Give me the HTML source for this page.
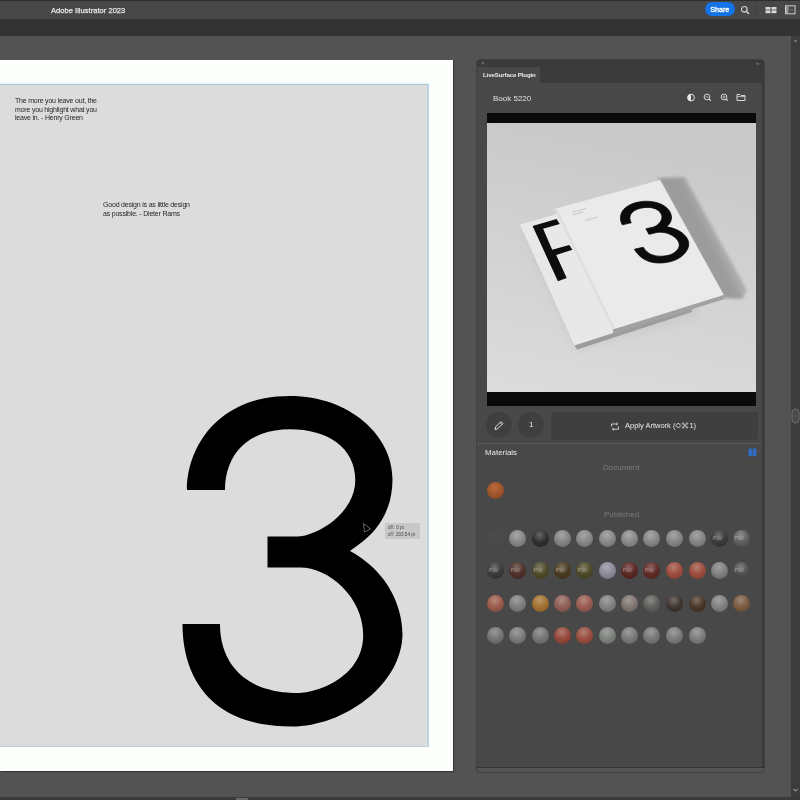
<!DOCTYPE html>
<html><head><meta charset="utf-8">
<style>
*{margin:0;padding:0;box-sizing:border-box}
.abs,.sph{will-change:transform}
html,body{width:800px;height:800px;overflow:hidden;background:#535353;font-family:"Liberation Sans",sans-serif}
.abs{position:absolute}
#topbar{left:0;top:0;width:800px;height:19px;background:#474747;border-top:1px solid #2e2e2e}
#title{left:51px;top:5.5px;font-size:7.6px;color:#e6e6e6;font-weight:normal;letter-spacing:0px;-webkit-text-stroke:0.25px #e6e6e6}
#bar2{left:0;top:19px;width:800px;height:17px;background:#333333}
#canvas{left:0;top:36px;width:791px;height:761px;background:#535353}
#bottombar{left:0;top:797px;width:800px;height:3px;background:#3a3a3a}
#artboard{left:0;top:60px;width:452.5px;height:711px;background:#fdfffd;box-shadow:1px 1px 1px rgba(0,0,0,0.35)}
#grayrect{left:0;top:84px;width:429px;height:663px;background:#dcdcdc;border-top:1.3px solid #adc2cc;border-right:2.6px solid #bdd5e3;border-bottom:1.5px solid #b9d2e0;box-shadow:0 -1.5px 0 #e6fafa}
.q{font-size:7px;color:#262626;line-height:8.7px;letter-spacing:-0.2px}

#panel{left:476.5px;top:59.5px;width:287px;height:712px;background:#484848;border-radius:3px;overflow:hidden;box-shadow:0 0 0 0.5px #2e2e2e}
#pedge{left:285px;top:0;width:2px;height:712px;background:#3a3a3a}
#ptitle{left:0;top:0;width:288.5px;height:6.5px;background:#3a3a3a}
#pclose{left:3.5px;top:0.3px;font-size:6px;color:#8a8a8a;line-height:7px}
#pcollapse{left:279px;top:0px;font-size:6px;color:#8a8a8a;line-height:7px}
#ptabrest{left:63px;top:6.5px;width:226px;height:16px;background:#3b3b3b}
#ptab{left:5.8px;top:10.6px;letter-spacing:-0.12px;font-size:6.1px;font-weight:bold;color:#ececec}
#bookname{left:16.3px;top:34px;font-size:8px;color:#e0e0e0}
#preview{left:9.5px;top:52.5px;width:269px;height:293.3px;background:#0a0a0a}
#photo{left:0;top:10px;width:269px;height:269px;background:#cfcfcf}
.circbtn{width:26px;height:26px;border-radius:50%;background:#3f3f3f}
#applybtn{left:74px;top:351.6px;width:206.5px;height:28px;border-radius:3px;background:#3f3f3f}
#psep{left:0;top:382.5px;width:284px;height:1.2px;background:#585858}
#mattitle{left:7.5px;top:387.5px;font-size:7.9px;color:#e8e8e8}
#docl{left:126px;top:402.5px;font-size:8px;color:#7a7a7a}
#publ{left:126.5px;top:449.8px;font-size:8px;color:#7a7a7a}

#share{left:705px;top:2px;width:29.5px;height:14px;border-radius:7px;background:#1473e6;color:#fff;font-size:7.2px;font-weight:normal;-webkit-text-stroke:0.3px #fff;text-align:center;line-height:15.5px}
#scrollbar{left:791px;top:36px;width:9px;height:761px;background:#3c3c3c}
#tooltip{left:385px;top:523px;width:35px;height:16px;background:#c8c8c8;border-radius:1px;font-size:4.6px;line-height:6.5px;color:#444;padding:2px 0 0 3px}
.sph{position:absolute;width:17px;height:17px;border-radius:50%}
#pbottom{left:0;top:706.5px;width:288px;height:5.5px;background:#545454;border-top:1px solid #333;border-bottom:1px solid #333}
.pw{position:absolute;left:1.5px;top:5px;font-size:6px;font-weight:bold;letter-spacing:-0.3px;line-height:7px;opacity:0.7}
</style></head><body>
<div class="abs" id="topbar"></div>
<div class="abs" id="title">Adobe Illustrator 2023</div>
<div class="abs" id="bar2"></div>
<div class="abs" id="canvas"></div>
<div class="abs" id="bottombar"></div>
<div class="abs" style="left:236px;top:797.5px;width:12px;height:2px;border-radius:1px;background:#6a6a6a"></div>
<div class="abs" id="artboard"></div>
<div class="abs" id="grayrect"></div>
<svg class="abs" style="left:0;top:0" width="800" height="800" viewBox="0 0 800 800"><path d="M187 490C187 448.3 216.8 396 290 396C349.4 396 392.5 435.4 392.5 479C392.5 524.7 361.5 542.4 350 551C399.4 578.2 402.5 623.3 402.5 633C402.5 685.3 343.3 726.5 292 726.5C197.5 726.5 182.5 661.6 182.5 624L220 624C220 658.9 240.5 693 298 693C317.2 693 363.2 677.2 363.2 635C363.2 597.4 329.2 567.5 300 567.5L267.5 567.5L267.5 536.5L297 536.5C317 536.5 355.3 513 355.3 480C355.3 447.8 328 429.2 290 429.2C248.1 429.2 225 454.3 225 490Z" fill="#000"/></svg>

<div class="abs q" style="left:15px;top:97.3px">The more you leave out, the<br>more you highlight what you<br>leave in. - Henry Green</div>
<div class="abs q" style="left:103px;top:200.6px">Good design is as little design<br>as possible. - Dieter Rams</div>

<div class="abs" id="panel">
  <div class="abs" id="ptitle"></div>
  <div class="abs" id="pedge"></div>
  <div class="abs" id="pclose">×</div>
  <div class="abs" id="pcollapse">»</div>
  <div class="abs" id="ptabrest"></div>
  <div class="abs" id="ptab">LiveSurface Plugin</div>
  <div class="abs" id="bookname">Book 5220</div>
  <div class="abs" id="preview"><div class="abs" id="photo"></div></div>
  <svg class="abs" id="photosvg" style="left:9.5px;top:62.5px" width="269" height="269" viewBox="486 122 269 269">
<defs>
<linearGradient id="bg" x1="0.2" y1="0" x2="0" y2="1"><stop offset="0" stop-color="#c8c9c8"/><stop offset="0.45" stop-color="#d2d2d2"/><stop offset="1" stop-color="#dcdcdc"/></linearGradient>
<linearGradient id="sh" gradientUnits="userSpaceOnUse" x1="700" y1="225" x2="722" y2="214"><stop offset="0" stop-color="#9c9c9c"/><stop offset="0.55" stop-color="#b4b4b4"/><stop offset="1" stop-color="#d2d2d2" stop-opacity="0"/></linearGradient>
<filter id="blur1" x="-20%" y="-20%" width="140%" height="140%"><feGaussianBlur stdDeviation="1.6"/></filter>
<filter id="blur2" x="-20%" y="-20%" width="140%" height="140%"><feGaussianBlur stdDeviation="4"/></filter>
</defs>
<rect x="486" y="122" width="269" height="269" fill="url(#bg)"/>
<polygon points="520,230 575,350 700,315 640,215" fill="#c4c4c4" filter="url(#blur2)" opacity="0.6"/>
<polygon points="657,177 684,176 746,289 741,298 722,297" fill="url(#sh)" filter="url(#blur1)"/>
<polygon points="519,223.6 556,213 690,307 573.5,344.5" fill="#e8e8e8"/>
<polygon points="573.5,344.5 690,307 691,311 576,348.5" fill="#9c9c9c"/>
<polygon points="531.6,225.1 555.6,218.1 558.7,222.9 542.1,227.7 551.2,248.7 568.3,243.9 571.4,248.7 555.2,253.9 565.7,277.1 556.9,280.2" fill="#0d0d0d"/>
<polygon points="553.3,207.9 659.1,179.1 722.9,293.9 611.75,328.5" fill="#eaeaea"/>
<polygon points="553.3,207.9 556,207.2 614,327.7 611.75,328.5" fill="#dedede"/>
<polygon points="611.75,328.5 722.9,293.9 723.5,298 612.5,333" fill="#a2a2a2"/>
<path d="M187 490C187 448.3 216.8 396 290 396C349.4 396 392.5 435.4 392.5 479C392.5 524.7 361.5 542.4 350 551C399.4 578.2 402.5 623.3 402.5 633C402.5 685.3 343.3 726.5 292 726.5C197.5 726.5 182.5 661.6 182.5 624L220 624C220 658.9 240.5 693 298 693C317.2 693 363.2 677.2 363.2 635C363.2 597.4 329.2 567.5 300 567.5L267.5 567.5L267.5 536.5L297 536.5C317 536.5 355.3 513 355.3 480C355.3 447.8 328 429.2 290 429.2C248.1 429.2 225 454.3 225 490Z" fill="#0b0b0b" stroke="#0b0b0b" stroke-width="3" transform="matrix(0.2365,-0.05526,0.0984,0.180,528.86,146.0)"/>
<g fill="#c9c9c9"><polygon points="571,211 585,207 585.3,208 571.3,212"/><polygon points="571.5,213.5 582,210.6 582.3,211.6 571.8,214.5"/><polygon points="584,219 597,215.5 597.3,216.5 584.3,220"/></g>
</svg>
  <div class="abs circbtn" style="left:9px;top:352px"></div>
  <div class="abs circbtn" style="left:41px;top:352px"><span class="abs" style="left:11px;top:8px;font-size:8px;color:#e8e8e8">1</span></div>
  <div class="abs" id="applybtn"><span class="abs" style="left:74px;top:8.8px;font-size:7.5px;color:#e8e8e8;white-space:nowrap">Apply Artwork (<svg width="14" height="7" viewBox="0 0 14 7" style="vertical-align:-0.5px"><path d="M0.8 3.5 L3.3 1 L5.8 3.5 L3.3 6 Z" fill="none" stroke="#e8e8e8" stroke-width="0.9"/><path d="M8.3 1.8 L11.7 5.2 M11.7 1.8 L8.3 5.2" stroke="#e8e8e8" stroke-width="0.9"/><circle cx="8" cy="1.5" r="0.8" fill="none" stroke="#e8e8e8" stroke-width="0.6"/><circle cx="12" cy="1.5" r="0.8" fill="none" stroke="#e8e8e8" stroke-width="0.6"/><circle cx="8" cy="5.5" r="0.8" fill="none" stroke="#e8e8e8" stroke-width="0.6"/><circle cx="12" cy="5.5" r="0.8" fill="none" stroke="#e8e8e8" stroke-width="0.6"/></svg>1)</span></div>

  <svg class="abs" style="left:208px;top:32px" width="72" height="12" viewBox="0 0 72 12">
    <circle cx="6" cy="5.6" r="3.4" fill="none" stroke="#e6e6e6" stroke-width="1"/><path d="M6 2.2 A3.4 3.4 0 0 0 6 9 Z" fill="#e6e6e6"/>
    <circle cx="22" cy="5" r="2.9" fill="none" stroke="#d6d6d6" stroke-width="1"/><line x1="24.1" y1="7.1" x2="25.8" y2="8.8" stroke="#d6d6d6" stroke-width="1.3"/><line x1="20.6" y1="5" x2="23.4" y2="5" stroke="#d6d6d6" stroke-width="0.8"/>
    <circle cx="39" cy="5" r="2.9" fill="none" stroke="#d6d6d6" stroke-width="1"/><line x1="41.1" y1="7.1" x2="42.8" y2="8.8" stroke="#d6d6d6" stroke-width="1.3"/><line x1="37.6" y1="5" x2="40.4" y2="5" stroke="#d6d6d6" stroke-width="0.8"/><line x1="39" y1="3.6" x2="39" y2="6.4" stroke="#d6d6d6" stroke-width="0.8"/>
    <path d="M52 2.5 L52 8.5 L60 8.5 L60 3.5 L56 3.5 L55 2.5 Z" fill="none" stroke="#d6d6d6" stroke-width="1"/><line x1="52" y1="4.6" x2="60" y2="4.6" stroke="#d6d6d6" stroke-width="0.8"/>
  </svg>
  <svg class="abs" style="left:15px;top:359px" width="14" height="14" viewBox="0 0 14 14"><path d="M3 10.5 L3.6 8 L9 2.6 L10.9 4.5 L5.5 9.9 Z" fill="none" stroke="#e0e0e0" stroke-width="1"/><line x1="8" y1="3.6" x2="9.9" y2="5.5" stroke="#e0e0e0" stroke-width="0.8"/></svg>
  <svg class="abs" style="left:132.5px;top:362px" width="10" height="9" viewBox="0 0 10 9"><path d="M1.5 4.5 L1.5 2 L7.5 2 M6.2 0.8 L7.6 2 L6.2 3.2 M8.5 4.5 L8.5 7.2 L2.5 7.2 M3.8 6 L2.4 7.2 L3.8 8.4" fill="none" stroke="#dcdcdc" stroke-width="0.9"/></svg>
  <svg class="abs" style="left:271px;top:388px" width="9" height="9" viewBox="0 0 9 9"><rect x="0.5" y="0.5" width="3.7" height="7.8" fill="#2f6cbf"/><rect x="4.7" y="0.5" width="3.7" height="7.8" fill="#2f6cbf"/></svg>
  <div class="abs" id="pbottom"></div>
  <div class="abs" id="psep"></div>
  <div class="abs" id="mattitle">Materials</div>
  <div class="abs" id="docl">Document</div>
  <div class="abs" id="publ">Published</div>
</div>

<div class="abs" id="share">Share</div>
<svg class="abs" style="left:738px;top:3px" width="14" height="14" viewBox="0 0 14 14"><circle cx="6.3" cy="6.3" r="2.8" fill="none" stroke="#d0d0d0" stroke-width="1.2"/><line x1="8.3" y1="8.3" x2="10.6" y2="10.6" stroke="#d0d0d0" stroke-width="1.4" stroke-linecap="round"/></svg>
<div class="abs" style="left:756px;top:4px;width:1px;height:12px;background:#3e3e3e"></div>
<svg class="abs" style="left:764px;top:5px" width="14" height="10" viewBox="0 0 14 10"><rect x="1.5" y="2" width="5" height="2.6" fill="#d8d8d8"/><rect x="7.5" y="2" width="5" height="2.6" fill="#d8d8d8"/><rect x="1.5" y="5.4" width="5" height="2.8" fill="#d8d8d8"/><rect x="7.5" y="5.4" width="5" height="2.8" fill="#d8d8d8"/></svg>
<svg class="abs" style="left:783px;top:4px" width="14" height="12" viewBox="0 0 14 12"><rect x="2.5" y="1.8" width="9.5" height="8" fill="none" stroke="#cfcfcf" stroke-width="1"/><rect x="3" y="2.3" width="2.5" height="7" fill="#9a9a9a"/><rect x="6" y="4.5" width="4" height="3" fill="#5a5a5a"/></svg>
<div class="abs" id="scrollbar"></div>
<svg class="abs" style="left:791px;top:36px" width="9" height="760" viewBox="0 0 9 760"><path d="M2.5 5.5 L4.5 3.5 L6.5 5.5" fill="#8a8a8a"/><rect x="1" y="373" width="7" height="14" rx="3.5" fill="#4a4a4a" stroke="#7a7a7a" stroke-width="0.8"/><path d="M2.5 753 L4.5 755.2 L6.5 753" fill="none" stroke="#bdbdbd" stroke-width="1"/></svg>
<div class="abs" id="tooltip">dX: 0 pt<br>dY: 203.54 pt</div>
<svg class="abs" style="left:360px;top:521px" width="14" height="16" viewBox="0 0 14 16"><path d="M3.5 2.5 L10.5 8 L4.5 11 Z" fill="none" stroke="#707070" stroke-width="0.9" stroke-linejoin="round"/></svg>
<div id="sphwrap"><div class="sph" style="left:487.3px;top:529.7px;background:#4a4a4a"></div><div class="sph" style="left:509.2px;top:529.7px;background:radial-gradient(circle at 45% 30%,#a7a7a7 0%,#858585 50%,#676767 100%)"></div>
<div class="sph" style="left:532.0px;top:529.7px;background:radial-gradient(circle at 45% 30%,#686868 0%,#2e2e2e 50%,#232323 100%)"></div>
<div class="sph" style="left:554.1px;top:529.7px;background:radial-gradient(circle at 45% 30%,#a5a5a5 0%,#838383 50%,#666666 100%)"></div>
<div class="sph" style="left:576.3px;top:529.7px;background:radial-gradient(circle at 45% 30%,#a7a7a7 0%,#868686 50%,#686868 100%)"></div>
<div class="sph" style="left:598.7px;top:529.7px;background:radial-gradient(circle at 45% 30%,#a9a9a9 0%,#888888 50%,#6a6a6a 100%)"></div>
<div class="sph" style="left:621.3px;top:529.7px;background:radial-gradient(circle at 45% 30%,#a9a9a9 0%,#888888 50%,#6a6a6a 100%)"></div>
<div class="sph" style="left:643.4px;top:529.7px;background:radial-gradient(circle at 45% 30%,#a7a7a7 0%,#868686 50%,#686868 100%)"></div>
<div class="sph" style="left:666.1px;top:529.7px;background:radial-gradient(circle at 45% 30%,#a6a6a6 0%,#848484 50%,#666666 100%)"></div>
<div class="sph" style="left:688.6px;top:529.7px;background:radial-gradient(circle at 45% 30%,#a5a5a5 0%,#838383 50%,#666666 100%)"></div>
<div class="sph" style="left:710.9px;top:529.7px;background:radial-gradient(circle at 45% 30%,#717171 0%,#3a3a3a 50%,#2d2d2d 100%)"><span class="pw" style="color:#929292">PW</span></div>
<div class="sph" style="left:733.3px;top:529.7px;background:radial-gradient(circle at 45% 30%,#8b8b8b 0%,#5e5e5e 50%,#494949 100%)"><span class="pw" style="color:#a6a6a6">PW</span></div>
<div class="sph" style="left:487.3px;top:561.8px;background:radial-gradient(circle at 45% 30%,#717171 0%,#3a3a3a 50%,#2d2d2d 100%)"><span class="pw" style="color:#929292">PW</span></div>
<div class="sph" style="left:509.2px;top:561.8px;background:radial-gradient(circle at 45% 30%,#7f6964 0%,#4e3028 50%,#3c251f 100%)"><span class="pw" style="color:#9d8d88">PW</span></div>
<div class="sph" style="left:532.0px;top:561.8px;background:radial-gradient(circle at 45% 30%,#7f7c64 0%,#4e4a28 50%,#3c391f 100%)"><span class="pw" style="color:#9d9b88">PW</span></div>
<div class="sph" style="left:554.1px;top:561.8px;background:radial-gradient(circle at 45% 30%,#7c715e 0%,#4a3a20 50%,#392d18 100%)"><span class="pw" style="color:#9b9284">PW</span></div>
<div class="sph" style="left:576.3px;top:561.8px;background:radial-gradient(circle at 45% 30%,#7f7c64 0%,#4e4a28 50%,#3c391f 100%)"><span class="pw" style="color:#9d9b88">PW</span></div>
<div class="sph" style="left:598.7px;top:561.8px;background:radial-gradient(circle at 45% 30%,#aca9b4 0%,#8c8898 50%,#6d6a76 100%)"></div>
<div class="sph" style="left:621.3px;top:561.8px;background:radial-gradient(circle at 45% 30%,#88625f 0%,#5a2622 50%,#461d1a 100%)"><span class="pw" style="color:#a48785">PW</span></div>
<div class="sph" style="left:643.4px;top:561.8px;background:radial-gradient(circle at 45% 30%,#8b6561 0%,#5e2a24 50%,#49201c 100%)"><span class="pw" style="color:#a68986">PW</span></div>
<div class="sph" style="left:666.1px;top:561.8px;background:radial-gradient(circle at 45% 30%,#b77e72 0%,#9c4c3c 50%,#793b2e 100%)"></div>
<div class="sph" style="left:688.6px;top:561.8px;background:radial-gradient(circle at 45% 30%,#b77e72 0%,#9c4c3c 50%,#793b2e 100%)"></div>
<div class="sph" style="left:710.9px;top:561.8px;background:radial-gradient(circle at 45% 30%,#a2a2a2 0%,#7e7e7e 50%,#626262 100%)"></div>
<div class="sph" style="left:733.3px;top:561.8px;background:radial-gradient(circle at 45% 30%,#7f7f7f 0%,#4e4e4e 50%,#3c3c3c 100%)"><span class="pw" style="color:#9d9d9d">PW</span></div>
<div class="sph" style="left:487.3px;top:594.8px;background:radial-gradient(circle at 45% 30%,#b6887c 0%,#9a5a4a 50%,#784639 100%)"></div>
<div class="sph" style="left:509.2px;top:594.8px;background:radial-gradient(circle at 45% 30%,#a0a0a0 0%,#7c7c7c 50%,#606060 100%)"></div>
<div class="sph" style="left:532.0px;top:594.8px;background:radial-gradient(circle at 45% 30%,#ba9869 0%,#a07030 50%,#7c5725 100%)"></div>
<div class="sph" style="left:554.1px;top:594.8px;background:radial-gradient(circle at 45% 30%,#ad8b83 0%,#8e5e54 50%,#6e4941 100%)"></div>
<div class="sph" style="left:576.3px;top:594.8px;background:radial-gradient(circle at 45% 30%,#b68881 0%,#9a5a50 50%,#78463e 100%)"></div>
<div class="sph" style="left:598.7px;top:594.8px;background:radial-gradient(circle at 45% 30%,#a3a3a3 0%,#808080 50%,#636363 100%)"></div>
<div class="sph" style="left:621.3px;top:594.8px;background:radial-gradient(circle at 45% 30%,#a29a98 0%,#7e7470 50%,#625a57 100%)"></div>
<div class="sph" style="left:643.4px;top:594.8px;background:radial-gradient(circle at 45% 30%,#8b8b88 0%,#5e5e5a 50%,#494946 100%)"></div>
<div class="sph" style="left:666.1px;top:594.8px;background:radial-gradient(circle at 45% 30%,#746c69 0%,#3e3430 50%,#302825 100%)"></div>
<div class="sph" style="left:688.6px;top:594.8px;background:radial-gradient(circle at 45% 30%,#7c6e64 0%,#4a3628 50%,#392a1f 100%)"></div>
<div class="sph" style="left:710.9px;top:594.8px;background:radial-gradient(circle at 45% 30%,#a3a3a3 0%,#808080 50%,#636363 100%)"></div>
<div class="sph" style="left:733.3px;top:594.8px;background:radial-gradient(circle at 45% 30%,#9f8875 0%,#7a5a40 50%,#5f4631 100%)"></div>
<div class="sph" style="left:487.3px;top:627.1px;background:radial-gradient(circle at 45% 30%,#999999 0%,#727272 50%,#585858 100%)"></div>
<div class="sph" style="left:509.2px;top:627.1px;background:radial-gradient(circle at 45% 30%,#9f9f9f 0%,#7a7a7a 50%,#5f5f5f 100%)"></div>
<div class="sph" style="left:532.0px;top:627.1px;background:radial-gradient(circle at 45% 30%,#9a9a9a 0%,#747474 50%,#5a5a5a 100%)"></div>
<div class="sph" style="left:554.1px;top:627.1px;background:radial-gradient(circle at 45% 30%,#b17b71 0%,#94483a 50%,#73382d 100%)"></div>
<div class="sph" style="left:576.3px;top:627.1px;background:radial-gradient(circle at 45% 30%,#b47e74 0%,#984c3e 50%,#763b30 100%)"></div>
<div class="sph" style="left:598.7px;top:627.1px;background:radial-gradient(circle at 45% 30%,#a0a39f 0%,#7c807a 50%,#60635f 100%)"></div>
<div class="sph" style="left:621.3px;top:627.1px;background:radial-gradient(circle at 45% 30%,#9d9d9d 0%,#787878 50%,#5d5d5d 100%)"></div>
<div class="sph" style="left:643.4px;top:627.1px;background:radial-gradient(circle at 45% 30%,#9c9c9c 0%,#767676 50%,#5c5c5c 100%)"></div>
<div class="sph" style="left:666.1px;top:627.1px;background:radial-gradient(circle at 45% 30%,#9f9f9f 0%,#7a7a7a 50%,#5f5f5f 100%)"></div>
<div class="sph" style="left:688.6px;top:627.1px;background:radial-gradient(circle at 45% 30%,#a0a0a0 0%,#7c7c7c 50%,#606060 100%)"></div>
<div class="sph" style="left:487.1px;top:482.4px;width:16.6px;height:16.6px;background:radial-gradient(circle at 45% 32%,#b86a3c 0%,#a0542a 50%,#7a4020 100%)"></div></div>
</body></html>
